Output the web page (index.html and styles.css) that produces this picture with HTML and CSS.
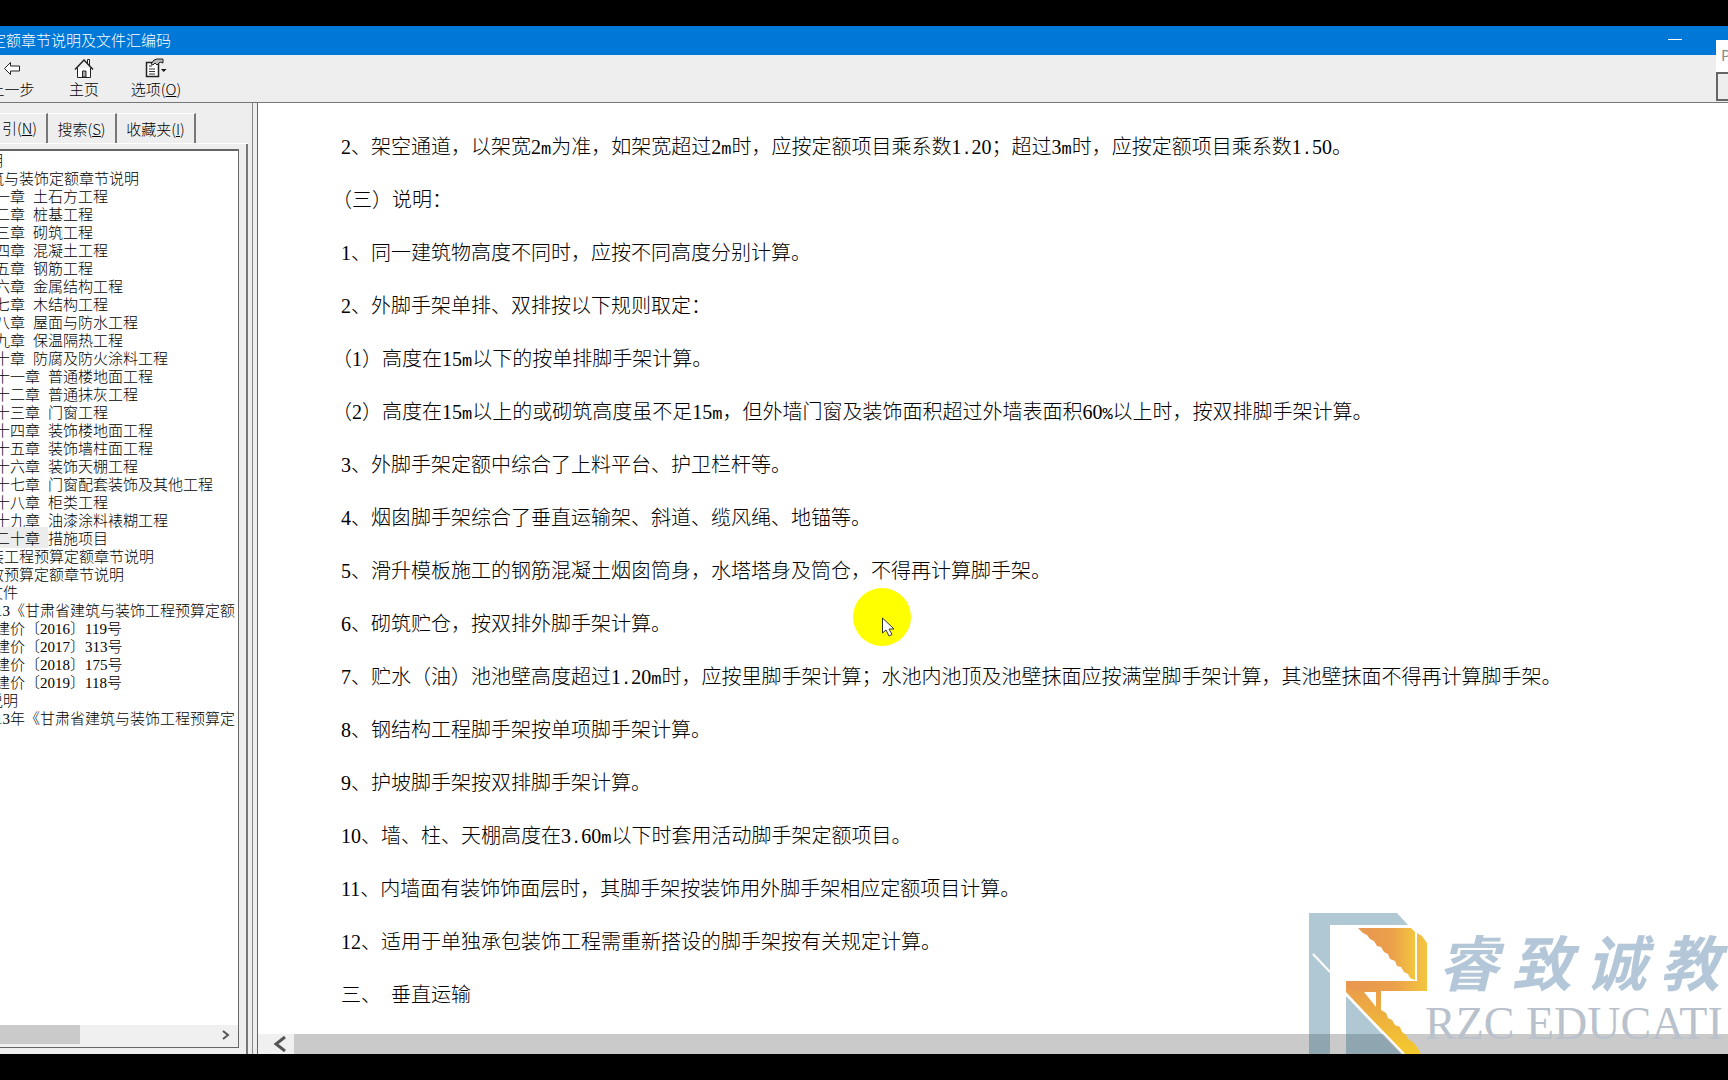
FILE: index.html
```html
<!DOCTYPE html>
<html lang="zh-CN">
<head>
<meta charset="utf-8">
<title>定额章节说明及文件汇编码</title>
<link rel="stylesheet" href="styles.css">
</head>
<body>
<div class="window">
  <header class="titlebar">
    <h1>定额章节说明及文件汇编码</h1>
    <button class="minimize" aria-label="最小化"></button>
  </header>

  <nav class="toolbar">
    <button class="tool back">
      <svg width="18" height="20" viewBox="0 0 18 20"><path d="M1.500 10.500L7.500 4.500v3.500h9v5H7.500v3.500z" fill="#fff" stroke="#222"/></svg>
      <span>上一步</span>
    </button>
    <button class="tool home">
      <svg width="20" height="20" viewBox="0 0 20 20"><path d="M3.500 10v9.500h13V10M13.500 5V1.500h2V8" fill="#fff" stroke="#222"/><path d="M1 11.500L10 2l9 9.500" fill="none" stroke="#222" stroke-width="1.500"/><path d="M8.500 19v-6h3.500v6z" fill="#aaa" stroke="#222"/></svg>
      <span>主页</span>
    </button>
    <button class="tool options">
      <svg width="22" height="20" viewBox="0 0 22 20"><path d="M1.500 4.500h12v14h-12z" fill="#fff" stroke="#222" stroke-width="1.500"/><path d="M4 8h3M4 11h6M4 13.500h6M4 16h6" stroke="#333"/><path d="M6 6l3-4 3-1h6v4l-3-1-3 3-2-2-2 2z" fill="#bbb" stroke="#222"/><path d="M16 11h5.500L18.700 14z" fill="#111"/></svg>
      <span>选项(<u>O</u>)</span>
    </button>
  </nav>

  <div class="body">
    <aside class="side">
      <div class="tabs">
        <button class="tab first">引(<u>N</u>)</button>
        <button class="tab">搜索(<u>S</u>)</button>
        <button class="tab last">收藏夹(<u>I</u>)</button>
      </div>
      <div class="panel">
        <div class="treebox">
          <ul class="tree">
            <li class="root">明</li>
            <li class="book">筑与装饰定额章节说明</li>
            <li>一章<i></i>土石方工程</li>
            <li>二章<i></i>桩基工程</li>
            <li>三章<i></i>砌筑工程</li>
            <li>四章<i></i>混凝土工程</li>
            <li>五章<i></i>钢筋工程</li>
            <li>六章<i></i>金属结构工程</li>
            <li>七章<i></i>木结构工程</li>
            <li>八章<i></i>屋面与防水工程</li>
            <li>九章<i></i>保温隔热工程</li>
            <li>十章<i></i>防腐及防火涂料工程</li>
            <li>十一章<i></i>普通楼地面工程</li>
            <li>十二章<i></i>普通抹灰工程</li>
            <li>十三章<i></i>门窗工程</li>
            <li>十四章<i></i>装饰楼地面工程</li>
            <li>十五章<i></i>装饰墙柱面工程</li>
            <li>十六章<i></i>装饰天棚工程</li>
            <li>十七章<i></i>门窗配套装饰及其他工程</li>
            <li>十八章<i></i>柜类工程</li>
            <li>十九章<i></i>油漆涂料裱糊工程</li>
            <li><span class="current">二十章<i></i></span>措施项目</li>
            <li class="book">装工程预算定额章节说明</li>
            <li class="book">政预算定额章节说明</li>
            <li class="root">文件</li>
            <li><b>13</b>《甘肃省建筑与装饰工程预算定额</li>
            <li>建价〔<b>2016</b>〕<b>119</b>号</li>
            <li>建价〔<b>2017</b>〕<b>313</b>号</li>
            <li>建价〔<b>2018</b>〕<b>175</b>号</li>
            <li>建价〔<b>2019</b>〕<b>118</b>号</li>
            <li class="root">说明</li>
            <li><b>13</b>年《甘肃省建筑与装饰工程预算定</li>
          </ul>
          <div class="hscroll small">
            <div class="thumb"></div>
            <button class="arrow" aria-label="向右滚动"><svg width="8" height="10" viewBox="0 0 8 10"><path d="M1 1l5 4-5 4" fill="none" stroke="#555" stroke-width="2"/></svg></button>
          </div>
        </div>
      </div>
    </aside>
    <div class="splitter"></div>

    <main class="page">
      <article class="text">
        <p><b>2</b>、架空通道，以架宽<b>2<s>m</s></b>为准，如架宽超过<b>2<s>m</s></b>时，应按定额项目乘系数<b>1<s>.</s>20</b>；超过<b>3<s>m</s></b>时，应按定额项目乘系数<b>1<s>.</s>50</b>。</p>
        <p class="hang">（三）说明：</p>
        <p><b>1</b>、同一建筑物高度不同时，应按不同高度分别计算。</p>
        <p><b>2</b>、外脚手架单排、双排按以下规则取定：</p>
        <p class="hang">（<b>1</b>）高度在<b>15<s>m</s></b>以下的按单排脚手架计算。</p>
        <p class="hang">（<b>2</b>）高度在<b>15<s>m</s></b>以上的或砌筑高度虽不足<b>15<s>m</s></b>，但外墙门窗及装饰面积超过外墙表面积<b>60<s>%</s></b>以上时，按双排脚手架计算。</p>
        <p><b>3</b>、外脚手架定额中综合了上料平台、护卫栏杆等。</p>
        <p><b>4</b>、烟囱脚手架综合了垂直运输架、斜道、缆风绳、地锚等。</p>
        <p><b>5</b>、滑升模板施工的钢筋混凝土烟囱筒身，水塔塔身及筒仓，不得再计算脚手架。</p>
        <p><b>6</b>、砌筑贮仓，按双排外脚手架计算。</p>
        <p><b>7</b>、贮水（油）池池壁高度超过<b>1<s>.</s>20<s>m</s></b>时，应按里脚手架计算；水池内池顶及池壁抹面应按满堂脚手架计算，其池壁抹面不得再计算脚手架。</p>
        <p><b>8</b>、钢结构工程脚手架按单项脚手架计算。</p>
        <p><b>9</b>、护坡脚手架按双排脚手架计算。</p>
        <p><b>10</b>、墙、柱、天棚高度在<b>3<s>.</s>60<s>m</s></b>以下时套用活动脚手架定额项目。</p>
        <p><b>11</b>、内墙面有装饰饰面层时，其脚手架按装饰用外脚手架相应定额项目计算。</p>
        <p><b>12</b>、适用于单独承包装饰工程需重新搭设的脚手架按有关规定计算。</p>
        <p>三、<i></i>垂直运输</p>
      </article>
      <div class="hscroll large">
        <button class="arrow" aria-label="向左滚动"><svg width="14" height="16" viewBox="0 0 14 16"><path d="M12 1L3 8l9 7" fill="none" stroke="#555" stroke-width="3"/></svg></button>
        <div class="thumb"></div>
      </div>

      <svg class="pointer" width="64" height="64" viewBox="0 0 64 64">
        <circle cx="32" cy="32" r="29" fill="#ff0"/>
        <path d="M32.500 33v15l3.500-3 3 6 3-1.500-3-5.500h5z" fill="#fff" stroke="#333"/>
      </svg>

      <svg class="brand" width="450" height="164" viewBox="0 0 450 164">
        <defs>
          <linearGradient id="amber" x1="0" y1="0" x2="1" y2="0"><stop offset="0" stop-color="#e89650"/><stop offset=".6" stop-color="#eba04a"/><stop offset="1" stop-color="#f3c63f"/></linearGradient>
          <linearGradient id="leg" x1="0" y1="0" x2="0" y2="1"><stop offset="0" stop-color="#e9984e"/><stop offset="1" stop-color="#f4ca2d"/></linearGradient>
        </defs>
        <g fill="#b0c8d4">
          <path d="M31 23h88l11 12H52v129H31z"/>
          <path d="M68 106l55 58H68z"/>
        </g>
        <path d="M31 144h21v20H31zM68 144h36l19 20H68z" fill="#8fa5b0"/>
        <path d="M35 64l17 18" stroke="#fff" stroke-width="2"/>
        <path d="M80 38h53l4 4v48l-5-2-2-4-4-2-3-5-4-1-2-5-5-2-2-5-4-2-3-5-4-1-3-5-4-2-3-4-4-2z" fill="url(#amber)"/>
        <path d="M68 91h20l10 10h5v19l5 3 2 5 4 2 3 5 5 2 2 5 4 3 3 5 4 2 4 5 4 7h-18L68 102z" fill="url(#leg)"/>
        <path d="M139 43l5 3 5 7v48H78L68 97v-6h71z" fill="url(#amber)"/>
        <path d="M86 102h12v15z" fill="#fff"/>
        <path d="M68 104l58 60" stroke="#fff" stroke-width="2"/>
        <g class="brand-cn"><text x="160" y="96">睿</text><text x="234" y="96">致</text><text x="308" y="96">诚</text><text x="382" y="96">教</text></g>
        <text class="brand-en" x="147" y="149">RZC EDUCATI</text>
      </svg>
    </main>
  </div>

  <div class="popup">
    <div class="popup-title">P</div>
    <div class="popup-box"></div>
  </div>
</div>
</body>
</html>
```
FILE: styles.css
```css
* { box-sizing: border-box; }

body {
  margin: 0;
  background: #000;
  color: #000;
  font-family: "Noto Sans CJK SC", sans-serif;
}

button {
  margin: 0;
  padding: 0;
  border: 0;
  background: none;
  color: inherit;
  font: inherit;
}

svg { display: block; }

.window {
  position: relative;
  display: flex;
  flex-direction: column;
  min-height: 100vh;
  padding: 26px 0;
  overflow: hidden;
}

/* title bar */
.titlebar {
  display: flex;
  justify-content: space-between;
  height: 29px;
  padding-right: 46px;
  background: #0078d7;
  color: #fff;
}

.titlebar h1 {
  margin: 0 0 0 -9px;
  font-size: 15px;
  font-weight: 300;
  line-height: 27px;
}

.minimize {
  width: 14px;
  height: 14px;
  border-bottom: 1px solid #fff;
}

/* toolbar */
.toolbar {
  display: flex;
  height: 48px;
  background: #eee;
  border-bottom: 1px solid #777;
}

.tool {
  display: flex;
  flex-direction: column;
  align-items: center;
  padding-top: 3px;
  width: 72px;
  font-size: 15px;
  font-weight: 300;
  line-height: 22px;
  white-space: nowrap;
}

.tool.back { margin-left: -24px; }

/* two-pane body */
.body {
  display: flex;
  flex: 1;
  background: #eee;
}

.side {
  display: flex;
  flex-direction: column;
  width: 248px;
  overflow: hidden;
}

.tabs {
  display: flex;
  height: 41px;
  padding-top: 10px;
  border-bottom: 1px solid #fff;
}

.tab {
  width: 69px;
  height: 30px;
  border-top: 1px solid #fff;
  border-right: 2px solid #777;
  font-size: 15px;
  font-weight: 300;
  line-height: 28px;
  white-space: nowrap;
}

.tab.first {
  display: flex;
  justify-content: flex-end;
  width: 48px;
  padding-right: 9px;
}

.tab.last { width: 79px; }

.panel {
  display: flex;
  flex: 1;
  padding: 5px 7px 6px 0;
  border-right: 2px solid #777;
}

.treebox {
  display: flex;
  flex: 1;
  flex-direction: column;
  min-width: 0;
  background: #fff;
  border: 1px solid #666;
  border-top-width: 2px;
  border-left: 0;
  overflow: hidden;
}

.tree {
  flex: 1;
  margin: 0;
  padding: 0;
  list-style: none;
  font-size: 15px;
  font-weight: 300;
  line-height: 18px;
  white-space: nowrap;
}

.tree li { height: 18px; margin-left: -5px; }
.tree .root { margin-left: -12px; }
.tree .book { margin-left: -11px; }

.tree b,
.text b {
  font-family: "Liberation Serif", serif;
  font-weight: 400;
}

.tree i { display: inline-block; width: 8px; }

.current { background: #ececec; }

/* scrollbars */
.hscroll {
  display: flex;
  align-items: center;
  background: #f0f0f0;
}

.hscroll .thumb { background: #cacaca; }

.small {
  justify-content: space-between;
  height: 22px;
  padding: 0 8px 3px 0;
}

.small .thumb { width: 80px; height: 19px; }

.large { height: 20px; }
.large .arrow { padding: 0 7px 0 15px; }
.large .thumb { flex: 1; height: 20px; }

.splitter {
  width: 9px;
  background: linear-gradient(#888, #888) 4px 0 / 1px 100% no-repeat #eee;
}

/* document */
.page {
  position: relative;
  display: flex;
  flex: 1;
  flex-direction: column;
  min-width: 0;
  background: #fff;
  border-left: 1px solid #666;
  overflow: hidden;
}

.text {
  flex: 1;
  padding: 16px 0 0 83px;
  font-size: 20px;
  font-weight: 300;
  line-height: 53px;
  white-space: nowrap;
}

.text p { height: 53px; margin: 0; }
.text .hang { margin-left: -9px; }
.text i { display: inline-block; width: 10px; }

/* units and points take half a character, like the figures */
.text s {
  font-family: "Liberation Mono", monospace;
  font-size: 17px;
  text-decoration: none;
}

.pointer {
  position: absolute;
  left: 592px;
  top: 482px;
}

.brand {
  position: absolute;
  right: 0;
  bottom: 0;
}

.brand-cn {
  fill: #b3c7d9;
  font-size: 60px;
  font-style: italic;
  font-weight: 700;
}

.brand-en {
  fill: #b9c2cc;
  font-family: "Liberation Serif", serif;
  font-size: 46px;
}

/* floating window cut off by the screen edge */
.popup {
  position: absolute;
  top: 40px;
  right: 0;
  width: 12px;
  overflow: hidden;
  background: #fff;
}

.popup-title {
  height: 32px;
  padding-left: 5px;
  color: #888;
  font-size: 15px;
  line-height: 30px;
}

.popup-box {
  height: 29px;
  background: #eee;
  border: 2px solid #666;
  border-right: 0;
}
```
